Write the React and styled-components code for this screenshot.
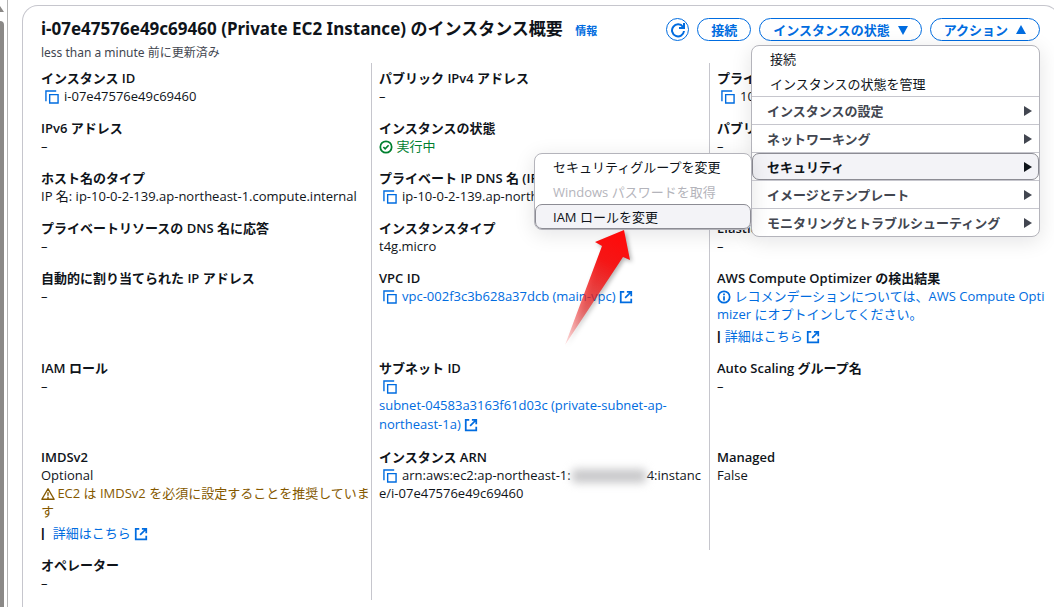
import React from "react";
import styled, { createGlobalStyle, css } from "styled-components";

const groups = ["インスタンスの設定", "ネットワーキング", "セキュリティ", "イメージとテンプレート", "モニタリングとトラブルシューティング"];

export default function App() {
  return (
    <>
      <GlobalStyle />
      <Page>
        <Rail>
          <svg width="5" height="12" viewBox="0 0 5 12"><path d="M0 6l4 6H0z" fill="#8b8987" /></svg>
          <Thumb />
        </Rail>
        <Card>
          <Header>
            <div>
              <Title>
                i-07e47576e49c69460 (Private EC2 Instance) のインスタンス概要 <Info href="#info">情報</Info>
              </Title>
              <Updated>less than a minute 前に更新済み</Updated>
            </div>
            <Actions>
              <RoundButton aria-label="更新"><RefreshIcon /></RoundButton>
              <PillButton>接続</PillButton>
              <PillButton>インスタンスの状態 <Caret d="M0 1h10L5 10z" /></PillButton>
              <MenuAnchor>
                <PillButton aria-expanded="true">アクション <Caret d="M0 9h10L5 0z" /></PillButton>
                <ActionMenu />
              </MenuAnchor>
            </Actions>
          </Header>
          <Grid>
            {fields.map((field, i) => (
              <Field key={i} $breakAll={field.breakAll} $clip={field.clip}>
                <dt>{field.label}</dt>
                <Value $tall={field.tall}>{field.value === undefined ? "–" : field.value}</Value>
              </Field>
            ))}
          </Grid>
        </Card>
      </Page>
    </>
  );
}

function ActionMenu() {
  return (
    <Menu>
      <MenuItem>接続</MenuItem>
      <MenuItem>インスタンスの状態を管理</MenuItem>
      {groups.map((name) => (
        <Group key={name}>
          <GroupButton $open={name === "セキュリティ"}>
            {name}
            <svg width="8" height="10" viewBox="0 0 8 10"><path d="M0 0l8 5-8 5z" fill="currentColor" /></svg>
          </GroupButton>
          {name === "セキュリティ" && (
            <Submenu>
              <MenuItem>セキュリティグループを変更</MenuItem>
              <MenuItem disabled>Windows パスワードを取得</MenuItem>
              <MenuItem $active>IAM ロールを変更</MenuItem>
              <Pointer width="80" height="126" viewBox="0 0 80 126">
                <defs>
                  <linearGradient id="fade" x1="65" y1="6" x2="8" y2="120" gradientUnits="userSpaceOnUse">
                    <stop offset="0" stopColor="#ff0a0a" />
                    <stop offset="0.25" stopColor="#f51616" />
                    <stop offset="0.65" stopColor="#ee2020" stopOpacity="0.65" />
                    <stop offset="1" stopColor="#ee2020" stopOpacity="0.1" />
                  </linearGradient>
                </defs>
                <path d="M65 1L36 13l7 4L6 116 64 28l7 3z" fill="url(#fade)" />
              </Pointer>
            </Submenu>
          )}
        </Group>
      ))}
    </Menu>
  );
}

function CopyButton() {
  return (
    <IconButton aria-label="コピー">
      <Icon viewBox="0 0 15 15" strokeWidth="1.5">
        <path d="M1 12V1h11M5 5h9v9H5z" />
      </Icon>
    </IconButton>
  );
}

function ExternalIcon() {
  return (
    <Icon viewBox="0 0 16 16" strokeWidth="2">
      <path d="M6 2H2v12h12v-4M9 2h5v5M14 2L7 9" />
    </Icon>
  );
}

function InfoIcon() {
  return (
    <Icon viewBox="0 0 16 16" strokeWidth="2">
      <circle cx="8" cy="8" r="6.5" />
      <path d="M8 7v5M8 4v2" />
    </Icon>
  );
}

function CheckIcon() {
  return (
    <Icon viewBox="0 0 16 16" strokeWidth="2">
      <circle cx="8" cy="8" r="6.5" />
      <path d="M5 8l2 2 4-4" />
    </Icon>
  );
}

function WarningIcon() {
  return (
    <Icon viewBox="0 0 16 16" strokeWidth="1.6">
      <path d="M8 2L1 14h14zM8 6v4M8 11v2" strokeLinejoin="round" />
    </Icon>
  );
}

function RefreshIcon() {
  return (
    <svg width="16" height="16" viewBox="0 0 16 16" fill="none" stroke="currentColor" strokeWidth="2">
      <path d="M14 9A6 6 0 1 1 13 5M14 1v5H9" />
    </svg>
  );
}

function Caret({ d }) {
  return (
    <svg width="10" height="10" viewBox="0 0 10 10"><path d={d} fill="currentColor" /></svg>
  );
}

const GlobalStyle = createGlobalStyle`
  * {
    box-sizing: border-box;
  }

  body {
    margin: 0;
    background: #ffffff;
    color: #0f141a;
    font-family: "Open Sans", "Noto Sans CJK JP", sans-serif;
    font-size: 13px;
    line-height: 18px;
    overflow: hidden;
  }

  button {
    font-family: inherit;
    cursor: pointer;
  }
`;

const Page = styled.div`
  display: flex;
  min-height: 100vh;
`;

const Rail = styled.div`
  display: flex;
  flex-direction: column;
  flex: none;
  width: 8px;
  margin-right: 14px;
  border-right: 1px solid #b4b4b4;
`;

const Thumb = styled.div`
  flex: 1;
  width: 4px;
  margin-top: 9px;
  border-top-right-radius: 4px;
  background: #8b8987;
`;

const Card = styled.main`
  flex: 1;
  min-width: 0;
  margin: 5px -6px 0 0;
  padding: 11px 11px 0;
  border: 1px solid #c6c6cd;
  border-bottom: 0;
  border-radius: 16px 16px 0 0;
`;

const Header = styled.header`
  display: flex;
  justify-content: space-between;
  padding: 0 8px 0 7px;
  font-family: "Noto Sans", "Noto Sans CJK JP", sans-serif;
`;

const Title = styled.h1`
  margin: 0;
  font-size: 17px;
  line-height: 24px;
  white-space: nowrap;
`;

const Link = styled.a`
  color: #006ce0;
  text-decoration: none;
`;

const Info = styled(Link)`
  margin-left: 8px;
  font-size: 11px;
`;

const Updated = styled.p`
  margin: 0;
  color: #424650;
  font-size: 12px;
  line-height: 20px;
`;

const Actions = styled.div`
  display: flex;
  align-items: flex-start;
  gap: 8px;
  padding-top: 1px;
`;

const PillButton = styled.button`
  display: flex;
  align-items: center;
  gap: 8px;
  height: 23px;
  padding: 0 13px;
  border: 1px solid #006ce0;
  border-radius: 12px;
  background: #ffffff;
  color: #006ce0;
  font-size: 13px;
  font-weight: 700;
  line-height: 18px;
  white-space: nowrap;
`;

const RoundButton = styled(PillButton)`
  justify-content: center;
  width: 23px;
  padding: 0;
`;

const MenuAnchor = styled.div`
  position: relative;
`;

const Menu = styled.div`
  position: absolute;
  z-index: 2;
  top: 27px;
  right: 0;
  width: 289px;
  border: 1px solid #b4b4bb;
  border-radius: 8px;
  background: #ffffff;
  box-shadow: 0 4px 20px 1px rgba(0, 7, 22, 0.1);
  font-family: "Open Sans", "Noto Sans CJK JP", sans-serif;
`;

const highlight = css`
  border: 1px solid #8c8c94;
  border-radius: 7px;
  background: #f3f3f7;
  color: #0f141a;
`;

const MenuItem = styled.button`
  display: block;
  width: 100%;
  height: 25px;
  padding: 0 17px;
  border: 1px solid transparent;
  background: none;
  color: #0f141a;
  font-size: 13px;
  line-height: 18px;
  text-align: left;

  &:disabled {
    color: #b4b4bb;
  }

  ${(props) => props.$active && highlight}
`;

const Group = styled.div`
  position: relative;
  border-top: 1px solid #c6c6cd;
`;

const GroupButton = styled.button`
  display: flex;
  align-items: center;
  justify-content: space-between;
  width: 100%;
  height: 27px;
  padding: 0 6px 0 14px;
  border: 1px solid transparent;
  background: none;
  color: #424650;
  font-size: 13px;
  font-weight: 700;
  line-height: 18px;

  ${(props) => props.$open && highlight}
`;

const Submenu = styled.div`
  position: absolute;
  top: 0;
  right: 100%;
  width: 218px;
  border: 1px solid #b4b4bb;
  border-radius: 8px;
  background: #ffffff;
  box-shadow: 0 4px 20px 1px rgba(0, 7, 22, 0.1);
`;

const Pointer = styled.svg`
  position: absolute;
  top: 100%;
  left: 24px;
  filter: drop-shadow(2px 2px 2px rgba(0, 0, 0, 0.3));
`;

const Grid = styled.dl`
  display: grid;
  grid-template-columns: repeat(3, minmax(0, 1fr));
  grid-auto-rows: minmax(50px, auto);
  margin: 0;
`;

const Field = styled.div`
  padding: 6px 0 8px 7px;
  word-break: ${(props) => (props.$breakAll ? "break-all" : "normal")};
  white-space: ${(props) => (props.$clip ? "nowrap" : "normal")};
  overflow: hidden;

  &:not(:nth-child(3n)) {
    border-right: 1px solid #c6c6cd;
  }

  dt {
    font-weight: 600;
  }
`;

const Value = styled.dd`
  margin: 0;
  line-height: ${(props) => (props.$tall ? "19px" : "18px")};
`;

const More = styled.div`
  display: flex;
  gap: ${(props) => props.$gap || "4px"};
  padding-top: 4px;
`;

const Bar = styled.span`
  font-family: "Liberation Sans", sans-serif;
  font-weight: 700;
`;

const Status = styled.span`
  color: #00802f;
`;

const Warning = styled.div`
  color: #855900;

  svg {
    margin-right: -1px;
  }
`;

const IconButton = styled.button`
  margin: 0 5px 0 4px;
  padding: 0;
  border: 0;
  background: none;
  color: #006ce0;
  font-size: 13px;
  line-height: 16px;
`;

const Icon = styled.svg`
  width: 14px;
  height: 14px;
  vertical-align: -3px;
  fill: none;
  stroke: currentColor;
`;

const Masked = styled.span`
  display: inline-block;
  width: 74px;
  height: 14px;
  margin: 0 1px;
  vertical-align: -3px;
  border-radius: 4px;
  background: #c9c9cb;
  filter: blur(4px);
`;

// three per row, in reading order
const fields = [
  { label: "インスタンス ID", value: <><CopyButton />i-07e47576e49c69460</> },
  { label: "パブリック IPv4 アドレス" },
  { label: "プライベート IPv4 アドレス", value: <><CopyButton />10.0.2.139</> },

  { label: "IPv6 アドレス" },
  { label: "インスタンスの状態", value: <Status><CheckIcon /> 実行中</Status> },
  { label: "パブリック DNS" },

  { label: "ホスト名のタイプ", value: "IP 名: ip-10-0-2-139.ap-northeast-1.compute.internal" },
  {
    label: "プライベート IP DNS 名 (IPv4 のみ)",
    value: <><CopyButton />ip-10-0-2-139.ap-northeast-1.compute.internal</>,
    clip: true,
  },
  { label: "", value: "" },

  { label: "プライベートリソースの DNS 名に応答" },
  { label: "インスタンスタイプ", value: "t4g.micro" },
  { label: "Elastic IP アドレス" },

  { label: "自動的に割り当てられた IP アドレス" },
  {
    label: "VPC ID",
    value: <><CopyButton /><Link href="#vpc">vpc-002f3c3b628a37dcb (main-vpc) <ExternalIcon /></Link></>,
  },
  {
    label: "AWS Compute Optimizer の検出結果",
    breakAll: true,
    value: (
      <>
        <Link href="#optimizer"><InfoIcon /> レコメンデーションについては、AWS Compute Optimizer にオプトインしてください。</Link>
        <More><Bar>|</Bar><Link href="#more">詳細はこちら <ExternalIcon /></Link></More>
      </>
    ),
  },

  { label: "IAM ロール" },
  {
    label: "サブネット ID",
    tall: true,
    value: (
      <>
        <CopyButton />
        <br />
        <Link href="#subnet">subnet-04583a3163f61d03c (private-subnet-ap-<wbr />northeast-1a) <ExternalIcon /></Link>
      </>
    ),
  },
  { label: "Auto Scaling グループ名" },

  {
    label: "IMDSv2",
    value: (
      <>
        Optional
        <Warning><WarningIcon /> EC2 は IMDSv2 を必須に設定することを推奨していま<wbr />す</Warning>
        <More $gap="8px"><Bar>|</Bar><Link href="#imds">詳細はこちら <ExternalIcon /></Link></More>
      </>
    ),
  },
  {
    label: "インスタンス ARN",
    breakAll: true,
    value: <><CopyButton />arn:aws:ec2:ap-northeast-1:<Masked />4:instanc<br />e/i-07e47576e49c69460</>,
  },
  { label: "Managed", value: "False" },

  { label: "オペレーター" },
];
